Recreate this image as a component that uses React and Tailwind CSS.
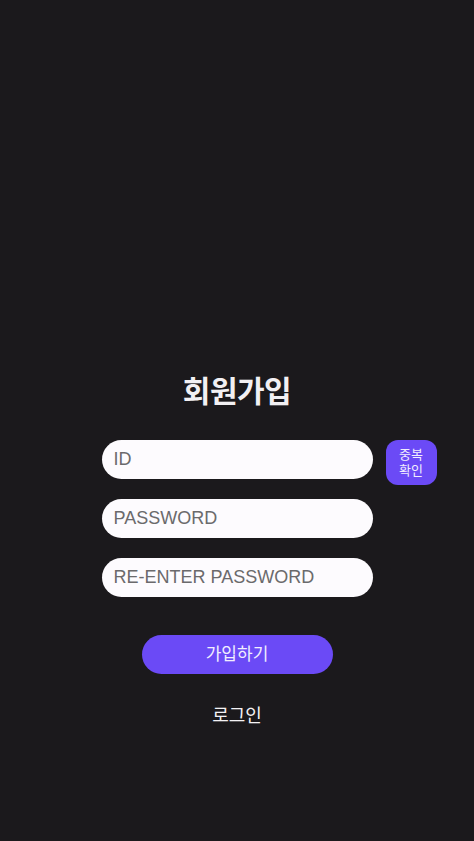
const Signup = () => {
  return (
    <div className="min-h-[841px] w-full bg-[#1b191c] flex flex-col items-center pt-[369px] font-['Liberation_Sans','Noto_Sans_CJK_KR',sans-serif]">
      <h1 className="text-[30px] leading-[46px] font-bold text-[#f2f0f3] tracking-[-0.5px]">
        회원가입
      </h1>

      <div className="mt-[25px] flex flex-col gap-[20px]">
        <div className="flex items-start gap-[13px] h-[39px]">
          <div className="w-[51px]" />
          <input
            className="w-[271px] h-[39px] rounded-full bg-[#fdfbfe] px-3 text-[18px] text-[#333] placeholder:text-[#6b6a6c] outline-none"
            placeholder="ID"
          />
          <button className="shrink-0 w-[51px] h-[45px] rounded-[12px] bg-[#6b4af6] text-[13px] leading-[16px] text-[#f1eefe]">
            중복
            <br />
            확인
          </button>
        </div>
        <div className="flex justify-center">
          <input
            type="password"
            className="w-[271px] h-[39px] rounded-full bg-[#fdfbfe] px-3 text-[18px] text-[#333] placeholder:text-[#6b6a6c] outline-none"
            placeholder="PASSWORD"
          />
        </div>
        <div className="flex justify-center">
          <input
            type="password"
            className="w-[271px] h-[39px] rounded-full bg-[#fdfbfe] px-3 text-[18px] text-[#333] placeholder:text-[#6b6a6c] outline-none"
            placeholder="RE-ENTER PASSWORD"
          />
        </div>
      </div>

      <button className="mt-[38px] w-[191px] h-[39px] rounded-full bg-[#6b4af6] text-[17px] text-[#f1eefe]">
        가입하기
      </button>

      <button className="mt-[29px] text-[18px] text-[#f4f2f5]">로그인</button>
    </div>
  );
};

export default function App() {
  return <Signup />;
}
